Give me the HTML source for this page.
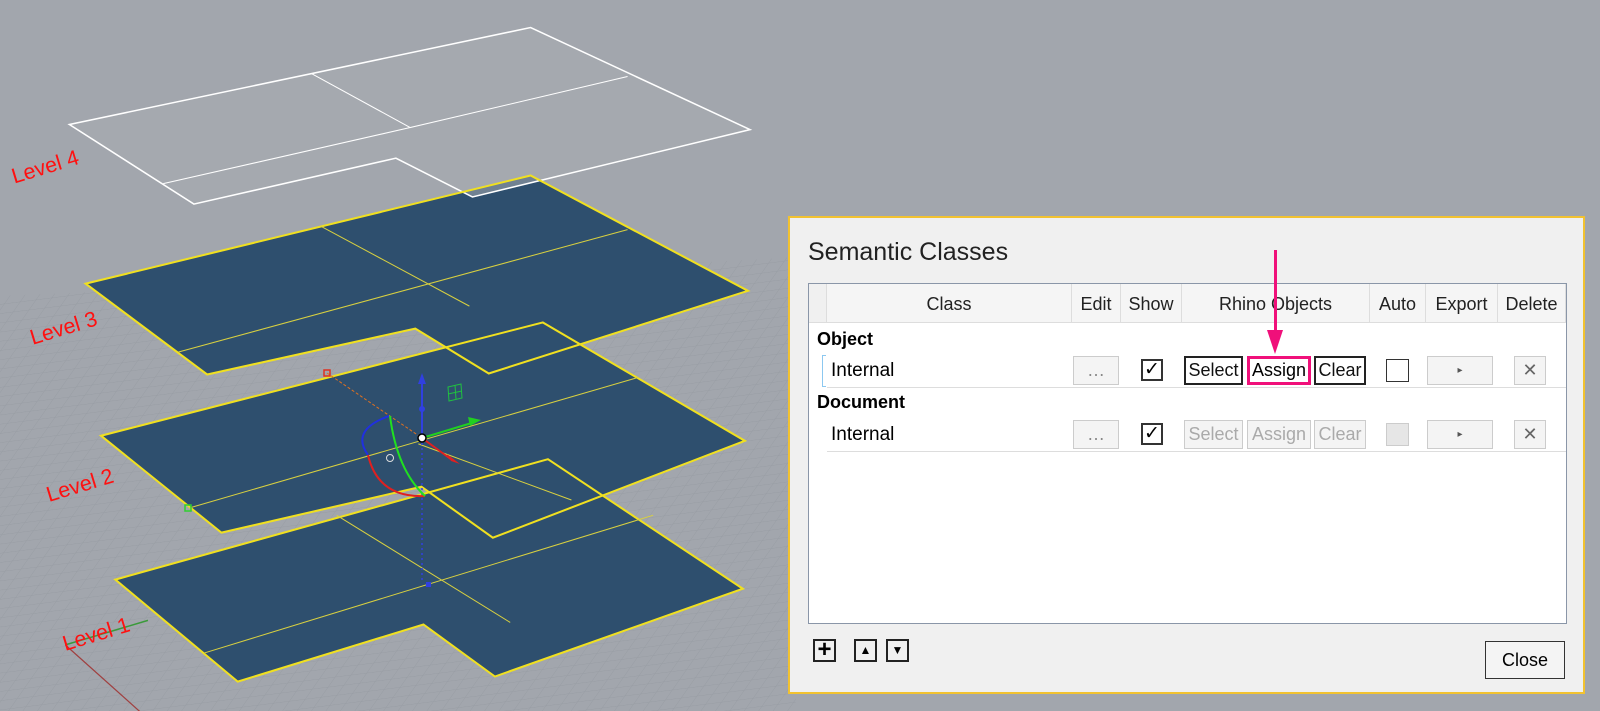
<!DOCTYPE html>
<html><head><meta charset="utf-8"><style>
body{margin:0;width:1600px;height:711px;overflow:hidden;background:#a2a6ad;font-family:"Liberation Sans",sans-serif;position:relative}
svg{position:absolute;left:0;top:0}
.dlg{position:absolute;left:788px;top:216px;width:797px;height:478px;background:#f0f0f0;border:2px solid #f2c230;box-sizing:border-box}
.title{position:absolute;left:18px;top:20px;font-size:25px;color:#222}
.tbl{position:absolute;left:18px;top:65px;width:759px;height:341px;background:#fff;border:1px solid #8a96a8;box-sizing:border-box}
.hd{position:absolute;top:0;height:39px;background:#f5f5f5;border-right:1px solid #ddd;border-bottom:1px solid #ddd;box-sizing:border-box;font-size:18px;line-height:40px;text-align:center;color:#222}
.grp{position:absolute;left:8px;font-weight:bold;font-size:18px}
.row{position:absolute;left:18px;width:739px;height:32px;background:#fff;border-bottom:1px solid #ddd}
.b{position:absolute;height:29px;top:1px;box-sizing:border-box;font-size:18px;line-height:27px;text-align:center;white-space:nowrap;overflow:hidden}
.dis{border:1px solid #ccc;color:#aaa;background:#f4f4f4}
.en{border:2px solid #222;color:#111;background:#fff;line-height:25px}
</style></head><body>
<svg width="1600" height="711">
<defs>
<pattern id="gr" width="14" height="10" patternUnits="userSpaceOnUse" patternTransform="skewX(-40) rotate(-8)">
<path d="M0,0 H14 M0,0 V10" stroke="#959aa1" stroke-width="1" fill="none"/>
</pattern>
</defs>
<g transform="scale(1.0204)">
<polygon points="0,290 420,272 780,252 780,711 0,711" fill="url(#gr)" opacity="0.8"/>
<g fill="#2e4f6e">
<polygon points="113,568 537,450 728,577 485,663 415,612 233,668"/>
<polygon points="99,427 532,316 730,432 483,527 413,477 217,522"/>
<polygon points="84,278 520,172 733,285 479,366 407,322 203,367"/>
</g>
<polygon points="68,122 190,200 388,155 463,193 735,127 520,27" fill="#a8abb0" fill-opacity="0.55" stroke="#fff" stroke-width="1.5"/>
<path d="M305,72 L402,125 L615,75 M402,125 L160,180" stroke="#fff" stroke-width="1" fill="none"/>
<g fill="none" stroke="#f0e020" stroke-width="2">
<polygon points="113,568 537,450 728,577 485,663 415,612 233,668"/>
<polygon points="99,427 532,316 730,432 483,527 413,477 217,522"/>
<polygon points="84,278 520,172 733,285 479,366 407,322 203,367"/>
</g>
<path d="M200,640 L640,505 M330,505 L500,610 M185,498 L625,370 M410,435 L560,490 M315,222 L460,300 M175,345 L615,225" stroke="#d8d040" stroke-width="1" fill="none"/>
<line x1="64" y1="632" x2="145" y2="608" stroke="#3a9a3a" stroke-width="1.5"/>
<line x1="64" y1="632" x2="140" y2="700" stroke="#a04040" stroke-width="1.2"/>
<g fill="#ff1010" font-family="Liberation Sans" font-size="21">
<text x="14" y="180" transform="rotate(-17 14 180)">Level 4</text>
<text x="32" y="338" transform="rotate(-17 32 338)">Level 3</text>
<text x="48" y="492" transform="rotate(-17 48 492)">Level 2</text>
<text x="64" y="638" transform="rotate(-17 64 638)">Level 1</text>
</g>
</g>
<line x1="327" y1="373" x2="422" y2="438" stroke="#e07020" stroke-width="1" stroke-dasharray="3,2"/>
<line x1="422" y1="438" x2="422" y2="580" stroke="#3040e0" stroke-width="1.5" stroke-dasharray="2,3"/>
<line x1="422" y1="438" x2="475" y2="422" stroke="#20d020" stroke-width="2"/><polygon points="481,420 468,417 470,426" fill="#20d020"/>
<line x1="422" y1="438" x2="422" y2="380" stroke="#3040e0" stroke-width="2"/><polygon points="418,384 422,373 426,384" fill="#3040e0"/>
<circle cx="422" cy="409" r="3" fill="#3040e0"/>
<line x1="422" y1="438" x2="452" y2="460" stroke="#e02020" stroke-width="2"/><polygon points="447,454 460,464 451,461" fill="#e02020"/>
<path d="M389,416 Q350,430 368,455" stroke="#2030e0" stroke-width="2" fill="none"/>
<path d="M368,455 Q378,498 425,496" stroke="#e02020" stroke-width="2" fill="none"/>
<path d="M390,416 Q397,470 425,496" stroke="#20e020" stroke-width="2" fill="none"/>
<path d="M448,387 L461,384 L462,398 L449,401 Z M448,394 L462,391 M455,385 L456,399" stroke="#20c040" stroke-width="1" fill="none"/>
<circle cx="422" cy="438" r="4" fill="#fff" stroke="#000" stroke-width="1.5"/>
<circle cx="390" cy="458" r="3.5" fill="none" stroke="#ddd" stroke-width="1"/>
<rect x="324" y="370" width="6" height="6" fill="none" stroke="#e03020" stroke-width="1.5"/>
<rect x="185" y="505" width="6" height="6" fill="none" stroke="#30d030" stroke-width="1.5"/>
<rect x="426" y="582" width="5" height="5" fill="#3040e0"/>
</svg>
<div class="dlg">
<div class="title">Semantic Classes</div>
<div class="tbl">
<div class="hd" style="left:0;width:18px;background:#f0f0f0"></div>
<div class="hd" style="left:18px;width:245px">Class</div>
<div class="hd" style="left:263px;width:49px">Edit</div>
<div class="hd" style="left:312px;width:61px">Show</div>
<div class="hd" style="left:373px;width:188px">Rhino Objects</div>
<div class="hd" style="left:561px;width:56px">Auto</div>
<div class="hd" style="left:617px;width:72px">Export</div>
<div class="hd" style="left:689px;width:68px">Delete</div>
<div class="grp" style="top:45px">Object</div>
<div class="row" style="top:71px">
<div style="position:absolute;left:-5px;top:0;width:3px;height:30px;border:1px solid #8cc8f0;border-right:none"></div>
<div style="position:absolute;left:4px;top:5px;font-size:19px">Internal</div>
<div class="b dis" style="left:246px;width:46px;color:#888">…</div>
<div class="b" style="left:314px;width:22px;height:22px;top:4px;border:2px solid #333;font-size:19px;line-height:18px">✓</div>
<div class="b en" style="left:357px;width:59px">Select</div>
<div class="b" style="left:420px;width:64px;border:3px solid #f0107a;line-height:23px">Assign</div>
<div class="b en" style="left:487px;width:52px">Clear</div>
<div class="b" style="left:559px;width:23px;height:23px;top:4px;border:1px solid #333;background:#fff"></div>
<div class="b dis" style="left:600px;width:66px;font-size:10px;color:#555">▸</div>
<div class="b dis" style="left:687px;width:32px;color:#666">✕</div>
</div>
<div class="grp" style="top:108px">Document</div>
<div class="row" style="top:135px">
<div style="position:absolute;left:4px;top:5px;font-size:19px">Internal</div>
<div class="b dis" style="left:246px;width:46px;color:#888">…</div>
<div class="b" style="left:314px;width:22px;height:22px;top:4px;border:2px solid #333;font-size:19px;line-height:18px">✓</div>
<div class="b dis" style="left:357px;width:59px">Select</div>
<div class="b dis" style="left:420px;width:64px">Assign</div>
<div class="b dis" style="left:487px;width:52px">Clear</div>
<div class="b" style="left:559px;width:23px;height:23px;top:4px;border:1px solid #ccc;background:#e6e6e6"></div>
<div class="b dis" style="left:600px;width:66px;font-size:10px;color:#555">▸</div>
<div class="b dis" style="left:687px;width:32px;color:#666">✕</div>
</div>
</div>
<div style="position:absolute;left:484px;top:32px;width:3px;height:84px;background:#f0107a"></div>
<div style="position:absolute;left:477px;top:112px;width:0;height:0;border-left:8px solid transparent;border-right:8px solid transparent;border-top:24px solid #f0107a"></div>
<div style="position:absolute;left:23px;top:421px;width:23px;height:23px;border:2px solid #222;box-sizing:border-box;font-size:24px;line-height:18px;text-align:center;font-weight:bold">+</div>
<div style="position:absolute;left:64px;top:421px;width:23px;height:23px;border:2px solid #222;box-sizing:border-box;font-size:12px;line-height:19px;text-align:center">▲</div>
<div style="position:absolute;left:96px;top:421px;width:23px;height:23px;border:2px solid #222;box-sizing:border-box;font-size:12px;line-height:19px;text-align:center">▼</div>
<div style="position:absolute;left:695px;top:423px;width:80px;height:38px;border:1px solid #333;box-sizing:border-box;background:#f4f4f4;font-size:18px;line-height:36px;text-align:center">Close</div>
</div>
</body></html>
